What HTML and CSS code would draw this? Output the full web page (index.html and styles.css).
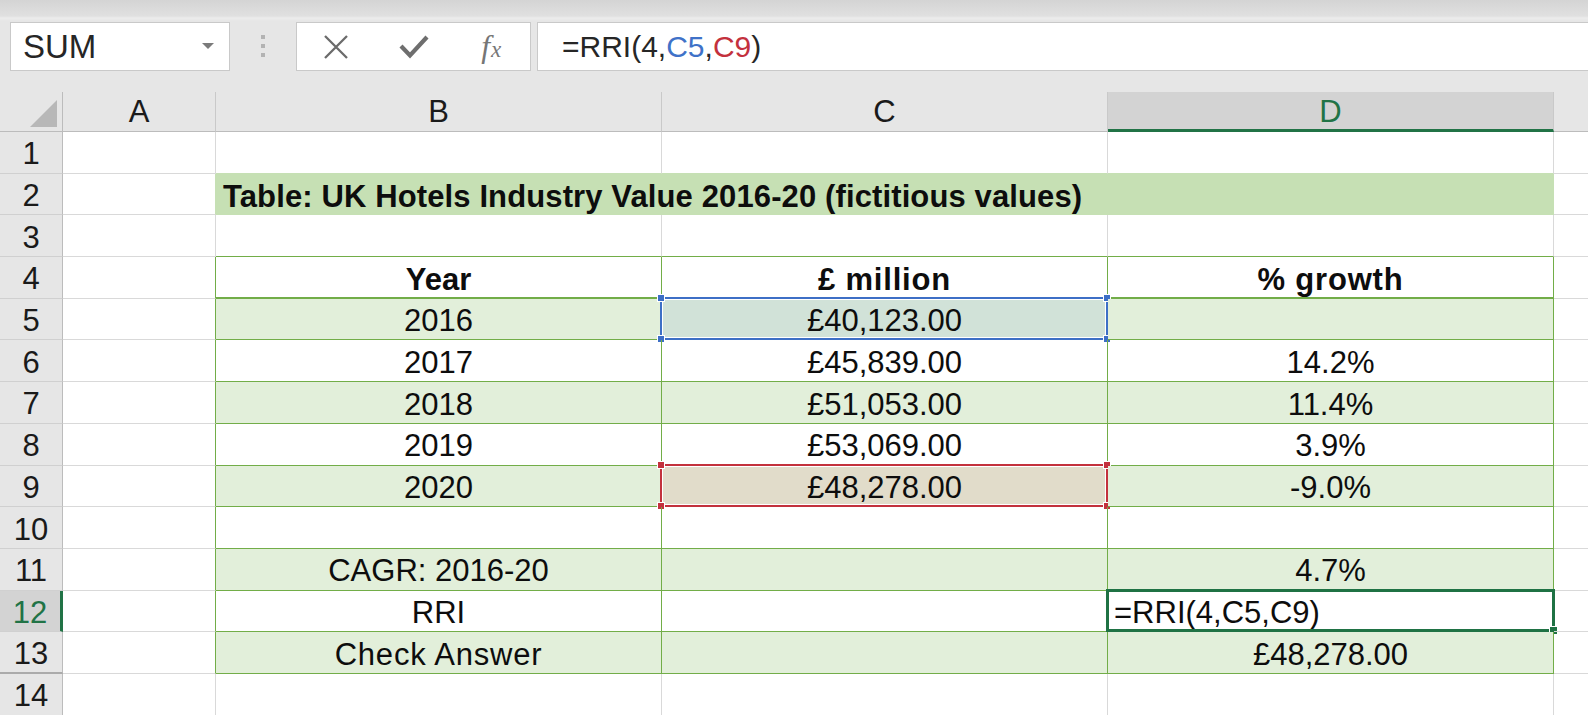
FILE: index.html
```html
<!DOCTYPE html>
<html>
<head>
<meta charset="utf-8">
<link rel="stylesheet" href="styles.css">
</head>
<body>
<div class="toolbar">
  <div class="namebox">SUM<span class="caret"></span></div>
  <div class="dots"><i></i><i></i><i></i></div>
  <div class="fxbox">
    <span class="slot"><svg width="26" height="26" viewBox="0 0 26 26"><path d="M2 2L24 24M24 2L2 24" stroke="#6b6b6b" stroke-width="2.3" fill="none"/></svg></span>
    <span class="slot"><svg width="32" height="26" viewBox="0 0 32 26"><path d="M3 12L12 21.5L29 3" stroke="#6e6e6e" stroke-width="4.2" fill="none"/></svg></span>
    <span class="slot fx">f<span class="fxx">x</span></span>
  </div>
  <div class="formula">=RRI(4,<span class="rb">C5</span>,<span class="rr">C9</span>)</div>
</div>
<div class="sheet">
  <div class="ch corner"><svg width="63" height="40" viewBox="0 0 63 40"><polygon points="57,8 57,35 30,35" fill="#b8b8b8"/></svg></div>
  <div class="ch">A</div><div class="ch">B</div><div class="ch">C</div><div class="ch sel">D</div><div class="ch last"></div>

  <div class="rh">1</div><div class="c"></div><div class="c t1"></div><div class="c t1"></div><div class="c t1"></div><div class="c e"></div>

  <div class="rh">2</div><div class="c pa"></div><div class="c title">Table: UK Hotels Industry Value 2016-20 (fictitious values)</div><div class="c e"></div>

  <div class="rh">3</div><div class="c"></div><div class="c top"></div><div class="c top"></div><div class="c top"></div><div class="c e"></div>

  <div class="rh">4</div><div class="c ga"></div><div class="c t hd">Year</div><div class="c t hd wide">£ million</div><div class="c t hd wide">% growth</div><div class="c e"></div>

  <div class="rh">5</div><div class="c ga"></div><div class="c t f">2016</div><div class="c t f refb">£40,123.00<div class="ref blue"><span class="h tl"></span><span class="h tr"></span><span class="h bl"></span><span class="h br"></span></div></div><div class="c t f"></div><div class="c e"></div>

  <div class="rh">6</div><div class="c ga"></div><div class="c t">2017</div><div class="c t">£45,839.00</div><div class="c t">14.2%</div><div class="c e"></div>

  <div class="rh">7</div><div class="c ga"></div><div class="c t f">2018</div><div class="c t f">£51,053.00</div><div class="c t f">11.4%</div><div class="c e"></div>

  <div class="rh">8</div><div class="c ga"></div><div class="c t">2019</div><div class="c t">£53,069.00</div><div class="c t">3.9%</div><div class="c e"></div>

  <div class="rh">9</div><div class="c ga"></div><div class="c t f">2020</div><div class="c t f refr">£48,278.00<div class="ref red"><span class="h tl"></span><span class="h tr"></span><span class="h bl"></span><span class="h br"></span></div></div><div class="c t f">-9.0%</div><div class="c e"></div>

  <div class="rh">10</div><div class="c ga"></div><div class="c t"></div><div class="c t"></div><div class="c t"></div><div class="c e"></div>

  <div class="rh">11</div><div class="c ga"></div><div class="c t f">CAGR: 2016-20</div><div class="c t f"></div><div class="c t f">4.7%</div><div class="c e"></div>

  <div class="rh rsel">12</div><div class="c ga"></div><div class="c t">RRI</div><div class="c t"></div><div class="c t active">=RRI(4,C5,C9)<div class="act"><span class="fh"></span></div></div><div class="c e"></div>

  <div class="rh r13">13</div><div class="c ga"></div><div class="c t f wide">Check Answer</div><div class="c t f"></div><div class="c t f">£48,278.00</div><div class="c e"></div>

  <div class="rh">14</div><div class="c"></div><div class="c"></div><div class="c"></div><div class="c"></div><div class="c e"></div>
</div>
</body>
</html>
```
FILE: styles.css
```css
* { box-sizing: border-box; margin: 0; padding: 0; }
body {
  margin: 0;
  width: 1588px;
  height: 715px;
  overflow: hidden;
  background: #fff;
  font-family: "Liberation Sans", Arial, sans-serif;
  color: #0d0d0d;
}
.toolbar {
  height: 92px;
  display: flex;
  align-items: flex-start;
  padding-top: 22px;
  background: linear-gradient(#d4d4d4 0px, #e0e0e0 16px, #ececec 18px, #e6e6e6 21px, #e6e6e6 100%);
}
.namebox {
  position: relative;
  margin-left: 10px;
  width: 220px;
  height: 49px;
  background: #fff;
  border: 1px solid #c9c9c9;
  display: flex;
  align-items: center;
  padding-left: 12px;
  padding-top: 1px;
  font-size: 33px;
  color: #262626;
}
.caret {
  position: absolute;
  right: 15px;
  top: 20px;
  width: 0;
  height: 0;
  border-left: 6px solid transparent;
  border-right: 6px solid transparent;
  border-top: 6px solid #7b7b7b;
}
.dots {
  width: 66px;
  display: flex;
  flex-direction: column;
  align-items: center;
  gap: 5px;
  padding-top: 13px;
}
.dots i {
  display: block;
  width: 4px;
  height: 4px;
  background: #b3b3b3;
}
.fxbox {
  width: 235px;
  height: 49px;
  background: #fff;
  border: 1px solid #c9c9c9;
  display: flex;
  align-items: center;
}
.slot {
  width: 78px;
  display: flex;
  justify-content: center;
  align-items: center;
}
.slot svg { display: block; }
.fx {
  align-items: baseline;
  font-family: "Liberation Serif", "Times New Roman", serif;
  font-style: italic;
  font-size: 32px;
  color: #767676;
  line-height: 1;
  padding-bottom: 2px;
}
.fxx { font-size: 23px; margin-left: 1px; }
.formula {
  margin-left: 6px;
  flex: 1;
  height: 49px;
  background: #fff;
  border: 1px solid #c9c9c9;
  border-right: none;
  padding-left: 24px;
  display: flex;
  align-items: center;
  font-size: 30px;
  color: #262626;
}
.rb { color: #3f72c8; }
.rr { color: #c3313d; }

.sheet {
  display: grid;
  grid-template-columns: 63px 153px 446px 446px 446px 34px;
  grid-template-rows: 40px repeat(14, 41.7px);
}
.ch {
  background: #e6e6e6;
  border-right: 1px solid #c9c9c9;
  border-bottom: 1px solid #bcbcbc;
  display: flex;
  align-items: center;
  justify-content: center;
  font-size: 31px;
  color: #1a1a1a;
}
.ch.corner { border-right-color: #bcbcbc; display: block; }
.ch.corner svg { display: block; }
.ch.sel {
  background: #d3d3d3;
  color: #217346;
  border-bottom: 3px solid #217346;
  padding-top: 2px;
}
.ch.last { border-right: none; }
.rh {
  background: #e6e6e6;
  border-right: 1px solid #bcbcbc;
  border-bottom: 1px solid #d0d0d0;
  display: flex;
  align-items: center;
  justify-content: center;
  padding-top: 4px;
  font-size: 31px;
  color: #1a1a1a;
}
.rh.rsel {
  background: #d3d3d3;
  color: #217346;
  border-right: 3px solid #217346;
}
.rh.r13 { border-bottom: 2px solid #ababab; }

.c {
  position: relative;
  border-right: 1px solid #d9d9d9;
  border-bottom: 1px solid #d9d9d9;
  font-size: 31px;
  line-height: 36px;
  padding-top: 4.5px;
  white-space: nowrap;
  text-align: center;
}
.c.e { border-right: none; }
.c.t1 { border-bottom-color: #c6e0b4; }
.c.pa { border-right-color: #c6e0b4; }
.c.title {
  grid-column: span 3;
  background: #c6e0b4;
  border-right-color: #c6e0b4;
  border-bottom-color: #c6e0b4;
  font-weight: bold;
  font-size: 31px;
  letter-spacing: 0.12px;
  text-align: left;
  padding-left: 7px;
  padding-top: 5px;
}
.c.top { border-bottom-color: #72ad48; }
.c.ga { border-right-color: #72ad48; }
.c.t {
  border-right-color: #72ad48;
  border-bottom-color: #72ad48;
}
.c.hd {
  font-weight: bold;
  border-bottom-width: 2px;
  padding-top: 4.5px;
}
.c.wide { letter-spacing: 0.8px; }
.c.f { background: #e2efda; }
.c.refb { background: #d1e2d8; }
.c.refr { background: #e1dcca; }
.c.active { text-align: left; padding-left: 6px; background: #fff; }

.ref {
  position: absolute;
  left: -2px;
  top: -2px;
  right: -1px;
  bottom: -1px;
  border: 2px solid;
  box-shadow: inset 0 0 0 1px #fff;
}
.ref.blue { border-color: #3d6fc6; }
.ref.red { border-color: #c3313d; }
.h {
  position: absolute;
  width: 8px;
  height: 8px;
  border: 1px solid #fff;
}
.blue .h { background: #3d6fc6; }
.red .h { background: #c3313d; }
.h.tl { left: -5px; top: -5px; }
.h.tr { right: -5px; top: -5px; }
.h.bl { left: -5px; bottom: -5px; }
.h.br { right: -5px; bottom: -5px; }

.act {
  position: absolute;
  left: -2px;
  top: -2px;
  right: -2px;
  bottom: -1px;
  border: 3px solid #1f7244;
}
.fh {
  position: absolute;
  right: -6px;
  bottom: -6px;
  width: 9px;
  height: 9px;
  background: #1f7244;
  border: 1px solid #fff;
}
```
